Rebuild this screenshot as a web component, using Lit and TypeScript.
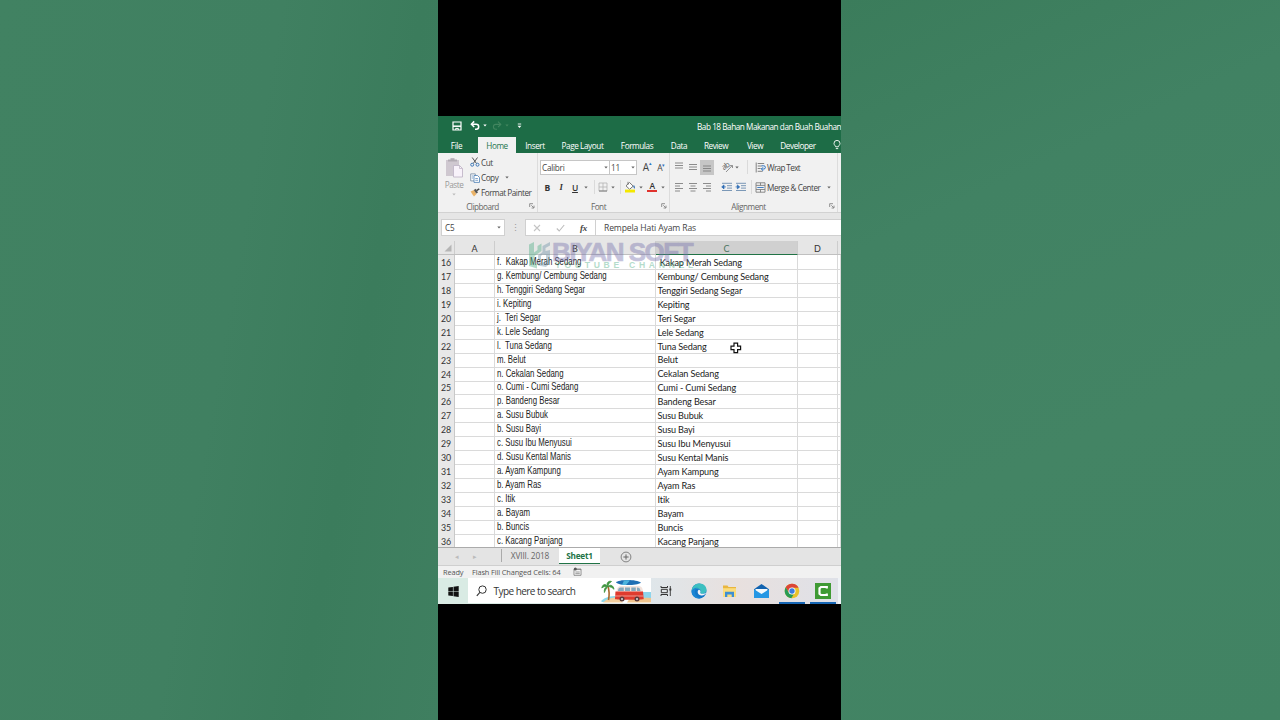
import { LitElement, html, css, svg } from "lit";
import { customElement } from "lit/decorators.js";

const rows: [number, string, string][] = [
  [16, "f.  Kakap Merah Sedang", " Kakap Merah Sedang"],
  [17, "g. Kembung/ Cembung Sedang", "Kembung/ Cembung Sedang"],
  [18, "h. Tenggiri Sedang Segar", "Tenggiri Sedang Segar"],
  [19, "i. Kepiting", "Kepiting"],
  [20, "j.  Teri Segar", "Teri Segar"],
  [21, "k. Lele Sedang", "Lele Sedang"],
  [22, "l.  Tuna Sedang", "Tuna Sedang"],
  [23, "m. Belut", "Belut"],
  [24, "n. Cekalan Sedang", "Cekalan Sedang"],
  [25, "o. Cumi - Cumi Sedang", "Cumi - Cumi Sedang"],
  [26, "p. Bandeng Besar", "Bandeng Besar"],
  [27, "a. Susu Bubuk", "Susu Bubuk"],
  [28, "b. Susu Bayi", "Susu Bayi"],
  [29, "c. Susu Ibu Menyusui", "Susu Ibu Menyusui"],
  [30, "d. Susu Kental Manis", "Susu Kental Manis"],
  [31, "a. Ayam Kampung", "Ayam Kampung"],
  [32, "b. Ayam Ras", "Ayam Ras"],
  [33, "c. Itik", "Itik"],
  [34, "a. Bayam", "Bayam"],
  [35, "b. Buncis", "Buncis"],
  [36, "c. Kacang Panjang", "Kacang Panjang"],
];

const icon = (w: number, h: number, body: unknown) =>
  html`<svg width=${w} height=${h} viewBox="0 0 ${w} ${h}" fill="none">${body}</svg>`;

const caret = (c = "#666") => icon(4, 3, svg`<path d="M.3 .5h3.4L2 2.5z" fill=${c} />`);
const launcher = icon(6, 6, svg`<path d="M.7 4V.7H4M2.3 2.3l2.4 2.4M5 2.6V5H2.6" stroke="#777" stroke-width=".8"/>`);
const lines = (spec: [number, number, number][], c = "#808080") =>
  icon(10, 10, spec.map(([x, y, w]) => svg`<path d="M${x} ${y}h${w}" stroke=${c} stroke-width=".9"/>`));

const save = icon(10, 10, svg`<path d="M1 1h8v8H1z" stroke="#fff" stroke-width="1.2"/><path d="M1 5.200h8" stroke="#fff" stroke-width="1.500"/><path d="M3.700 9V7.400h2.600V9" stroke="#fff" stroke-width="1"/>`);
const undo = icon(10, 9, svg`<path d="M1.400 3.200h4.800a2.500 2.500 0 0 1 0 5H5" stroke="#fff" stroke-width="1.500"/><path d="M4.200 .4 1.400 3.200 4.200 6" stroke="#fff" stroke-width="1.500"/>`);
const redo = icon(10, 9, svg`<path d="M8.800 3.400h-5a2.400 2.400 0 0 0 0 4.800H5" stroke="#42855f" stroke-width="1.100"/><path d="M6 .6l2.800 2.800L6 6.200" stroke="#42855f" stroke-width="1.100"/>`);
const qat = icon(5, 6, svg`<path d="M.8 1h3.400" stroke="#fff" stroke-width=".9"/><path d="M.6 2.800h3.800L2.500 5z" fill="#fff"/>`);
const bulb = icon(8, 10, svg`<path d="M2.700 6.800C2.500 5.600 1 5 1 3.400a3 3 0 0 1 6 0c0 1.600-1.500 2.200-1.700 3.400zM2.800 8.600h2.400" stroke="#fff" stroke-width=".9"/>`);

const paste = icon(19, 21, svg`<path d="M1 3h13v16H1z" fill="#cfc8d0"/><path d="M3 3.500h9" stroke="#b2acb4" stroke-width="2"/><path d="M5.500 1.200h4v2.500h-4z" fill="#b2acb4"/><path d="M8.500 8.500h6l3 3V20h-9z" fill="#f8f2fa" stroke="#c2b7c8" stroke-width=".9"/><path d="M14.500 8.500v3h3" stroke="#c2b7c8" stroke-width=".8"/>`);
const cut = icon(10, 10, svg`<path d="M2.200 .5 6.500 6.500M7.500 .5 3.200 6.500" stroke="#555" stroke-width="1"/><circle cx="2.200" cy="7.700" r="1.500" stroke="#3f79b8"/><circle cx="7.500" cy="7.700" r="1.500" stroke="#3f79b8"/>`);
const copy = icon(10, 10, svg`<path d="M.7 .9h4.600v7H.7z" fill="#fff" stroke="#71889f" stroke-width=".8"/><path d="M4 2.500h3.500l2 2v4.900H4z" fill="#fff" stroke="#4a7eb5" stroke-width=".8"/><path d="M5.300 5.500h2.600M5.300 7.300h2.800M1.800 3h1.400M1.800 5h1.400" stroke="#4a7eb5" stroke-width=".7"/>`);
const painter = icon(10, 9, svg`<path d="M.6 3.500 4 2l2.500 4L4 8.600 2.800 7z" fill="#eab368"/><path d="M3.800 2 5.600.8 8 4.400 6.200 5.600z" fill="#555"/><path d="M6.500 2.600 9.300 .8" stroke="#444" stroke-width="1.500"/>`);
const borders = icon(10, 10, svg`<path d="M1 1h8v8H1zM5 1v8M1 5h8" stroke="#b4b4b4" stroke-width=".8"/><path d="M1 9h8" stroke="#777" stroke-width=".9"/>`);
const fill = icon(12, 12, svg`<path d="M2 4.800 5.500 1.500l3.700 3.600-3.600 3.200z" fill="#fff" stroke="#666" stroke-width=".9"/><path d="M4 .8v3" stroke="#666" stroke-width=".8"/><path d="M9.600 4.600c1 1.500 1.200 2 .6 2.800" stroke="#3470b0" stroke-width="1.300"/><path d="M1 8.600h10v2.900H1z" fill="#f4e800"/>`);
const rotate = icon(12, 12, svg`<text x="0" y="8" font-size="7.500" fill="#555" font-family="Open Sans" transform="rotate(-35 3 6)" letter-spacing="-.3">ab</text><path d="M4 11 10.300 4.500M8 4.600h2.500V7" stroke="#777" stroke-width=".8"/>`);
const indent = (flip: boolean) => icon(12, 10, svg`<path d="M1 1.300h10M6 3.700h5M6 6.100h5M1 8.500h10" stroke="#6d8db0" stroke-width=".9"/><path d=${flip ? "M.5 4.900h2.500M2.300 2.900 4.700 4.900 2.300 6.900z" : "M5 4.900H2.500M3 2.900.7 4.900 3 6.900z"} fill="#2c6cb5" stroke="#2c6cb5" stroke-width=".7"/>`);
const wrap = icon(11, 11, svg`<path d="M1.200 .5v10" stroke="#777" stroke-width=".9"/><path d="M2.700 1.500h6.500M2.700 4h4M2.700 6.500h3M2.700 9.300h5" stroke="#777" stroke-width=".9"/><path d="M6.500 3.800h2.300a1.500 1.500 0 0 1 0 3.200H6.500M8 5.300 6.300 7 8 8.700" stroke="#2f74c0" stroke-width="1"/>`);
const merge = icon(11, 11, svg`<path d="M1 .8h9v9.400H1zM1 3.400h9M1 7.500h9M5.500 .8v2.600M5.500 7.500v2.700" stroke="#808080" stroke-width=".9"/><path d="M2.300 5.500h6.400" stroke="#2f74c0" stroke-width=".9"/>`);

const start = icon(11, 11, svg`<path d="M.3 1.500 4.900.9v4.300H.3zM5.500.8 10.700.1v5.100H5.500zM.3 5.800h4.600v4.300L.3 9.500zM5.500 5.800h5.200v5.100L5.500 10.200z" fill="#111"/>`);
const search = icon(11, 12, svg`<circle cx="6.500" cy="4.600" r="3.700" stroke="#333" stroke-width="1"/><path d="M3.900 7.300.8 10.800" stroke="#333" stroke-width="1.100"/>`);
const van = icon(50, 24, svg`
  <path d="M33 13h17v9H33z" fill="#8ed5ec"/><path d="M0 22c4-4 9-5 16-5l4 6H1z" fill="#8fd8ea"/><path d="M2 23.500c4-4 9-5 15-5l5 5z" fill="#f3cf9e"/><path d="M28 20.500c8-1.500 14-2 22-1.500v4.500H26z" fill="#f0c58e"/>
  <path d="M7.500 21c1-5 1-9-.6-14" stroke="#a9682d" stroke-width="1.600"/>
  <path d="M6.500 7.500C4 4 1.500 5.500.8 9c2-1.600 3.500-1.600 5.700-1.500M6.500 7.500C5 4 7.500 1.500 10.500 2.500c-2 1.300-3 2.500-4 5M6.500 7.500c3-2.500 6-1 6.500 2.800-1.600-1.700-3-2.500-6.500-2.800M6.500 7.500C3.500 8.500 3 10.500 3.400 13.500c1-2.500 2-4 3.100-6" fill="#3f9440" stroke="#3f9440" stroke-width=".8"/>
  <path d="M15 3.500C17 .5 35 0 40 3.700 35 6.900 18 6.800 15 3.500z" fill="#1f6fb4"/><path d="M23 1.500c3-.3 4-.2 6-.1l-4 4.500h-4z" fill="#4db3dd"/>
  <path d="M15.500 13c.5-4.800 2-6 5-6h16c4 0 5 1.500 5.500 6z" fill="#f3e3dc"/><path d="M17 12c.3-2.600 1-3.500 2.500-3.500h3.300V12zM24 8.500h5V12h-5zM30.300 8.500h4.500V12h-4.500zM36 8.500c2.500 0 3 1 3.500 3.500H36z" fill="#86a9bc"/>
  <path d="M14.500 12.500h27.500l.7 7.500c0 1-28.400 1-28.700 0z" fill="#df3a2e"/><path d="M14 17h28.400" stroke="#f4c3b8" stroke-width=".7"/>
  <circle cx="21" cy="20" r="2.500" fill="#5a3a3c"/><circle cx="36" cy="20" r="2.500" fill="#5a3a3c"/><circle cx="21" cy="20" r="1" fill="#ddd"/><circle cx="36" cy="20" r="1" fill="#ddd"/>`);
const taskview = icon(12, 12, svg`<path d="M1 1v1.500h6.500V1M1 11V9.500h6.500V11M1.300 4.300h6v3.400h-6z" stroke="#333" stroke-width="1"/><path d="M10.300 1v10" stroke="#333" stroke-width=".9"/><path d="M9.400 3.500h1.900v2H9.400z" fill="#333"/>`);
const edge = icon(16, 16, svg`<circle cx="8" cy="8" r="7.500" fill="#1478c8"/><path d="M.6 8C1 3.500 4.300.5 8.300.5c4.400 0 7.200 3 7.200 6.300 0 2.700-2 4-4.200 4-1.800 0-2.400-.7-2-1.500.8-1.400 0-3.800-2.800-3.800C4 5.500 1.500 6.500.6 8z" fill="#3cbfc0"/><path d="M.6 8C1.500 5.800 4 4.200 7 4.800c-3 1-3.800 4-2.600 6.500C5.600 13.800 8 15.200 10 15.200 5 16.500.2 13 .6 8z" fill="#1b86d4"/><path d="M6.700 8.600c.2-1.200 1-1.900 1.800-1.700 1.200.4 1.100 1.700.8 2.400-.4.800.2 1.500 2 1.500 1.600 0 3-.5 4-1.400-.4 1.600-2.600 3.400-5 3.100-2.300 0-3.900-1.800-3.600-3.900z" fill="#f0f3f8"/>`);
const explorer = icon(15, 14, svg`<path d="M1 1.500h4.500l1 1.500H14v10H1z" fill="#e9b63f"/><path d="M1 4.200h13V13H1z" fill="#fbdc7c"/><path d="M3 7.800h9V13H9.700v-2.400H5.300V13H3z" fill="#3e8fd3"/>`);
const mail = icon(17, 16, svg`<path d="M1 6.300 8.500 1 16 6.300V15H1z" fill="#1263b0"/><path d="M2.500 6h12v5h-12z" fill="#f4fafd"/><path d="M1 6.300 8.500 11 16 6.300V15H1z" fill="#2597e4"/>`);
const chrome = icon(16, 16, svg`<circle cx="8" cy="8" r="7.300" fill="#e9c22b"/><path d="M1.700 4.300A7.300 7.300 0 0 1 14.500 4.700H8L4.900 9.500z" fill="#dc4437"/><path d="M1.700 4.300 4.900 9.800 8 11.500h1.600l-2.300 3.800A7.300 7.300 0 0 1 1.700 4.300z" fill="#279b55"/><circle cx="8" cy="8" r="3.500" fill="#fff"/><circle cx="8" cy="8" r="2.700" fill="#3d7de0"/>`);
const camtasia = icon(16, 16, svg`<path d="M0 0h16v16H0z" fill="#3f9a34"/><path d="M11.800 5.500V4H6L4.500 5.300v5.400L6 12h5.800v-1.500" stroke="#fff" stroke-width="2.200"/>`);
const macro = icon(9, 9, svg`<path d="M1 2h7v6.300H1z" fill="#fff" stroke="#777" stroke-width=".8"/><path d="M1 2.600h7M2.300 5h4.500M2.300 6.700h4.500" stroke="#777" stroke-width=".8"/><circle cx="2.300" cy="2" r="1.500" fill="#555"/>`);
const logo = icon(24, 27, svg`<path d="M1 2.500 6 0v10.500L9.500 8V4l4-2.500V9L6.500 14v7L9 22v4.500L1 24z" fill="#4fae86"/><path d="M10 13.500 14.500 10V4L22 0v3.500L17.500 6v3l4.500-1v13l-4 4-8-1.500V20l6 .5 2-1.500v-6l-3.500-.5-1.500 1.500V18l-3-1z" fill="#6f93a8"/>`);
const plus = icon(12, 12, svg`<circle cx="6" cy="6" r="4.900" stroke="#777" stroke-width=".9"/><path d="M6 3.400v5.200M3.400 6h5.200" stroke="#666" stroke-width="1"/>`);
const cancel = icon(8, 8, svg`<path d="M1 1l6 6M7 1 1 7" stroke="#c4c4c4" stroke-width="1.100"/>`);
const accept = icon(9, 8, svg`<path d="M.8 4.500 3.200 7 8.200 1" stroke="#bcbcbc" stroke-width="1.100"/>`);
const cursor = icon(12, 12, svg`<path d="M4 1.200h3.600v2.900h3v3.600h-3v3H4v-3H1V4.100h3z" fill="#fff" stroke="#111" stroke-width="1.200"/>`);

@customElement("app-root")
export class AppRoot extends LitElement {
  static styles = css`
    :host { display: block; width: 1280px; height: 720px; overflow: hidden; font-family: "Open Sans", "Noto Sans", sans-serif; font-size: 8.2px; letter-spacing: -0.48px; color: #444; }
    * { box-sizing: border-box; }
    svg { display: block; flex: none; overflow: visible; }
    .stage { display: grid; grid-template-columns: 438px 403px 439px; height: 720px; }
    .left { background: linear-gradient(100deg, #418262 0%, #408061 50%, #3b7c5c 75%, #3f7f60 100%); }
    .right { background: linear-gradient(155deg, #3b7c5b 0%, #418263 28%, #438464 60%, #418363 100%); }
    .phone { background: #000; padding-top: 116px; overflow: hidden; }
    .app { position: relative; display: grid; grid-template-rows: 21px 16px 60px 28px 14px 292px 18px 13px 26px; width: 403px; height: 488px; background: #f1f1f1; overflow: hidden; white-space: nowrap; }
    .title { background: #1d6c46; color: #fff; display: grid; grid-template-columns: 12px 13px 6px 12px 7px 4px 10px 10px 2px 10px 173px 144px; align-items: center; justify-items: center; padding-bottom: 2px; }
    .title .name { justify-self: start; padding-top: 2px; letter-spacing: -0.46px; }
    .tabs { background: #1d6c46; color: #fff; display: grid; grid-template-columns: 37px 3px 38px 38px 57px 52px 32px 42px 36px 50px 18px; align-items: center; justify-items: center; letter-spacing: -0.42px; }
    .tabs .active { background: #f1f1f1; color: #27754e; align-self: stretch; justify-self: stretch; display: grid; place-items: center; }
    .tabs .bulb { justify-self: end; }
    .ribbon { display: grid; grid-template-columns: 100px 132px 168px 3px; border-bottom: 1px solid #d2d2d2; }
    .group { display: grid; grid-template-rows: 47px 12px; border-right: 1px solid #dcdcdc; }
    .foot { display: grid; grid-template-columns: 1fr 11px; align-items: center; justify-items: center; color: #666; padding-left: 1px; letter-spacing: -0.5px; }
    .clip { display: grid; grid-template-columns: 32px 1fr; }
    .pastebox { display: grid; grid-template-rows: 25px 12px 6px; justify-items: center; align-items: end; color: #999; }
    .cmds { display: grid; grid-template-rows: 17px 14px 15px; padding-top: 0.5px; }
    .line { display: flex; align-items: center; gap: 1px; }
    .line .gap { width: 5px; }
    .two { display: grid; grid-template-rows: 15px 15px; row-gap: 5px; padding-top: 6.5px; }
    .fonts { display: grid; grid-template-columns: 70px 27px 3px 14px 14px; padding-left: 2px; align-items: center; }
    .box { height: 15px; background: #fff; border: 1px solid #c6c6c6; display: flex; align-items: center; justify-content: space-between; padding: 0 1px 0 1px; color: #444; letter-spacing: -0.25px; }
    .box.size { border-left: 0; }
    .inc { font-size: 10px; color: #444; display: flex; align-items: flex-start; justify-content: center; }
    .inc.small { font-size: 8.5px; }
    .inc sup { font-size: 5px; line-height: 6px; color: #2f74c0; }
    .biu { display: grid; grid-template-columns: 14px 14px 14px 8px 8px 10px 9px 6px 14px 8px 14px 8px; padding-left: 2px; align-items: center; justify-items: center; color: #333; font-size: 8.5px; }
    .bold { font-weight: 700; }
    .ital { font-style: italic; font-family: "Liberation Serif", serif; font-weight: 700; }
    .under { text-decoration: underline; font-weight: 600; }
    .fcolor { border-bottom: 2.5px solid #e0322d; width: 10px; line-height: 8px; text-align: center; font-weight: 600; }
    .al1 { display: grid; grid-template-columns: 14px 14px 14px 7px 13px 6px 14px 13px 60px; padding-left: 2px; align-items: center; justify-items: center; }
    .al2 { display: grid; grid-template-columns: 14px 14px 14px 6px 14px 14px 6px 13px 58px 8px; padding-left: 2px; align-items: center; justify-items: center; }
    .al1 .txt, .al2 .txt { justify-self: start; }
    .al1 .txt { letter-spacing: -0.65px; }
    .on { background: #c6c6c6; width: 14px; height: 15px; display: grid; place-items: center; }
    .sep { width: 1px; height: 14px; background: #dadada; }
    .fbar { background: #e6e6e6; display: grid; grid-template-columns: 64px 20px 71px 1fr; padding: 6px 0 5px 3px; }
    .fbox { background: #fff; border: 1px solid #d0d0d0; display: flex; align-items: center; justify-content: space-between; padding: 0 3px; letter-spacing: -0.2px; }
    .dots { display: grid; place-items: center; color: #999; font-size: 9px; }
    .ops { display: grid; grid-template-columns: 22px 23px 23px; justify-items: center; padding: 0; }
    .fx { font-family: "Liberation Serif", serif; font-style: italic; font-weight: 700; color: #444; font-size: 9px; }
    .formula { justify-content: flex-start; padding-left: 8px; border-right: 0; border-left: 0; color: #444; font-size: 8.6px; letter-spacing: -0.13px; }
    .heads, .row { display: grid; grid-template-columns: 17px 40px 161px 142px 40px 3px; }
    .heads { background: #e6e6e6; border-bottom: 1px solid #c0c0c0; font-family: Lato, sans-serif; font-size: 9px; color: #333; letter-spacing: 0; }
    .heads div { border-right: 1px solid #cdcdcd; display: grid; place-items: center; height: 13px; padding-top: 1px; }
    .heads .corner { place-items: center end; padding-right: 2px; }
    .heads .sel { background: #d0d0d0; border-bottom: 1.5px solid #217346; color: #4c7560; height: 14px; }
    .grid { background: #fff; overflow: hidden; }
    .row { height: 13.95px; font-family: Lato, sans-serif; font-size: 9.1px; font-variant-ligatures: none; letter-spacing: -0.13px; color: #222; line-height: 13px; white-space: pre; }
    .row div { border-right: 1px solid #dadada; border-bottom: 1px solid #dadada; }
    .row .num { background: #e8e8e8; text-align: center; border-color: #c9c9c9; color: #333; padding-top: 1px; font-size: 8.8px; }
    .row .b { font-family: "Liberation Sans", sans-serif; font-size: 10.2px; letter-spacing: 0; padding-left: 1.5px; line-height: 12px; }
    .row .b span { display: inline-block; transform: translateY(0.8px) scaleX(0.768); transform-origin: left; }
    .row .c { padding: 0.9px 0 0 1.5px; }
    .sheets { background: #e4e4e4; border-top: 1px solid #ababab; display: grid; grid-template-columns: 18px 18px 17px 58px 41px 51px; padding-left: 10px; align-items: center; justify-items: center; color: #666; }
    .nav { color: #bbb; font-size: 7px; }
    .tab1 { border-left: 1px solid #aaa; width: 100%; text-align: center; line-height: 13px; font-size: 8.3px; letter-spacing: -0.15px; margin-top: -2px; padding-right: 1px; }
    .tab2 { background: #fff; color: #217346; font-weight: 700; width: 41px; height: 16px; align-self: start; text-align: center; border-bottom: 1.5px solid #217346; line-height: 15px; letter-spacing: -0.25px; }
    .status { background: #f1f1f1; border-top: 1px solid #cfcfcf; display: grid; grid-template-columns: 29px 101px 12px; padding: 0 0 1px 5px; align-items: center; font-size: 7.4px; letter-spacing: -0.12px; color: #555; }
    .task { background: linear-gradient(90deg, #d9ebe4 0, #d9ebe4 30px, #dfe6ea 213px, #e8e0de 300px, #dfe1e8 400px, #eef2f6 400px); display: grid; grid-template-columns: 30px 183px 30px 35px 27px 36px 26px 36px; align-items: center; justify-items: center; }
    .searchbox { background: #fff; width: 183px; height: 25px; align-self: start; display: grid; grid-template-columns: 17.5px 107.5px 52px; align-items: center; padding-left: 8px; font-size: 10px; letter-spacing: -0.54px; color: #333; }
    .run { align-self: stretch; width: 26px; display: grid; place-items: center; border-bottom: 2px solid #1766b4; padding-top: 2px; }
    .mark { position: absolute; left: 90px; top: 126px; display: grid; grid-template-columns: 24px 150px; opacity: 0.42; }
    .mark .big { font-family: "Liberation Sans", sans-serif; font-weight: 700; font-size: 26px; line-height: 20px; height: 20px; letter-spacing: -1.5px; color: #7772ad; -webkit-text-stroke: 0.7px #7772ad; }
    .mark .small { font-family: "Liberation Sans", sans-serif; font-size: 8.6px; line-height: 7px; letter-spacing: 3.7px; color: #4fae86; padding-left: 3px; font-weight: 700; }
    .cursor { position: absolute; left: 292px; top: 226px; }
  `;

  render() {
    return html`<div class="stage">
      <div class="left"></div>
      <div class="phone"><div class="app">
        <div class="title">
          <span></span>${save}<span></span>${undo}${caret("#fff")}<span></span>${redo}${caret("#42855f")}<span></span>${qat}<span></span><span class="name">Bab 18 Bahan Makanan dan Buah Buahan(C</span>
        </div>
        <div class="tabs">
          <span>File</span><span></span><span class="active">Home</span><span>Insert</span><span>Page Layout</span><span>Formulas</span><span>Data</span><span>Review</span><span>View</span><span>Developer</span><span class="bulb">${bulb}</span>
        </div>
        <div class="ribbon">
          <div class="group">
            <div class="clip">
              <div class="pastebox">${paste}<span>Paste</span>${caret("#bbb")}</div>
              <div class="cmds">
                <div class="line">${cut}<span>Cut</span></div>
                <div class="line">${copy}<span>Copy</span><span class="gap"></span>${caret()}</div>
                <div class="line">${painter}<span>Format Painter</span></div>
              </div>
            </div>
            <div class="foot"><span>Clipboard</span>${launcher}</div>
          </div>
          <div class="group">
            <div class="two">
              <div class="fonts"><div class="box">Calibri${caret()}</div><div class="box size">11${caret()}</div><span></span><div class="inc">A<sup>▴</sup></div><div class="inc small">A<sup>▾</sup></div></div>
              <div class="biu"><span class="bold">B</span><span class="ital">I</span><span class="under">U</span>${caret()}<span class="sep"></span>${borders}${caret()}<span class="sep"></span>${fill}${caret()}<span class="fcolor">A</span>${caret()}</div>
            </div>
            <div class="foot"><span>Font</span>${launcher}</div>
          </div>
          <div class="group">
            <div class="two">
              <div class="al1">${lines([[1, 1, 8], [1, 3.5, 8], [1, 6, 8]])}${lines([[1, 2.5, 8], [1, 5, 8], [1, 7.5, 8]])}<span class="on">${lines([[1, 4, 8], [1, 6.5, 8], [1, 9, 8]])}</span><span></span>${rotate}${caret()}<span class="sep"></span>${wrap}<span class="txt">Wrap Text</span></div>
              <div class="al2">${lines([[1, 1.5, 8], [1, 4, 5], [1, 6.5, 8], [1, 9, 5]])}${lines([[1, 1.5, 8], [2.5, 4, 5], [1, 6.5, 8], [2.5, 9, 5]])}${lines([[1, 1.5, 8], [4, 4, 5], [1, 6.5, 8], [4, 9, 5]])}<span></span>${indent(false)}${indent(true)}<span class="sep"></span>${merge}<span class="txt">Merge &amp; Center</span>${caret()}</div>
            </div>
            <div class="foot"><span>Alignment</span>${launcher}</div>
          </div>
        </div>
        <div class="fbar">
          <div class="fbox"><span>C5</span>${caret()}</div>
          <div class="dots">⋮</div>
          <div class="fbox ops">${cancel}${accept}<span class="fx">fx</span></div>
          <div class="fbox formula">Rempela Hati Ayam Ras</div>
        </div>
        <div class="heads">
          <div class="corner">${icon(8, 8, svg`<path d="M7.5 .5v7h-7z" fill="#b5b5b5"/>`)}</div><div>A</div><div>B</div><div class="sel">C</div><div>D</div>
        </div>
        <div class="grid">${rows.map(([n, b, c]) => html`<div class="row"><div class="num">${n}</div><div></div><div class="b"><span>${b}</span></div><div class="c">${c}</div><div></div><div></div></div>`)}</div>
        <div class="sheets"><span class="nav">◂</span><span class="nav">▸</span><span></span><span class="tab1">XVIII. 2018</span><span class="tab2">Sheet1</span>${plus}</div>
        <div class="status"><span>Ready</span><span>Flash Fill Changed Cells: 64</span>${macro}</div>
        <div class="task">
          ${start}<div class="searchbox">${search}<span>Type here to search</span>${van}</div>${taskview}${edge}${explorer}${mail}<div class="run">${chrome}</div><div class="run">${camtasia}</div>
        </div>
        <div class="mark">${logo}<div><div class="big">BIYAN SOFT</div><div class="small">YOUTUBE CHANNEL</div></div></div>
        <div class="cursor">${cursor}</div>
      </div></div>
      <div class="right"></div>
    </div>`;
  }
}
